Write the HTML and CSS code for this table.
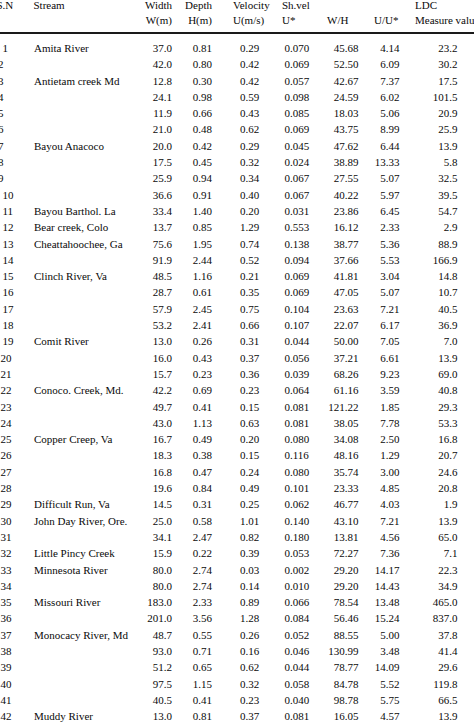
FILE: index.html
```html
<!DOCTYPE html>
<html>
<head>
<meta charset="utf-8">
<link rel="stylesheet" href="styles.css">
</head>
<body>
<div class="table">
  <div class="cols hdr">
    <div class="h sn-h"><span>S.N</span><span>&nbsp;</span></div>
    <div class="h"><span>Stream</span><span>&nbsp;</span></div>
    <div class="h r"><span>Width</span><span>W(m)</span></div>
    <div class="h r"><span>Depth</span><span>H(m)</span></div>
    <div class="h"><span>Velocity</span><span>U(m/s)</span></div>
    <div class="h"><span>Sh.vel</span><span>U*</span></div>
    <div class="h"><span>&nbsp;</span><span>W/H</span></div>
    <div class="h"><span>&nbsp;</span><span>U/U*</span></div>
    <div class="h"><span>LDC</span><span>Measure value</span></div>
  </div>
  <div class="rule"></div>
  <div class="rows">
    <div class="cols row"><span class="sn a">1</span><span>Amita River</span><span>37.0</span><span>0.81</span><span>0.29</span><span>0.070</span><span>45.68</span><span>4.14</span><span>23.2</span></div>
    <div class="cols row"><span class="sn b">2</span><span></span><span>42.0</span><span>0.80</span><span>0.42</span><span>0.069</span><span>52.50</span><span>6.09</span><span>30.2</span></div>
    <div class="cols row"><span class="sn b">3</span><span>Antietam creek Md</span><span>12.8</span><span>0.30</span><span>0.42</span><span>0.057</span><span>42.67</span><span>7.37</span><span>17.5</span></div>
    <div class="cols row"><span class="sn b">4</span><span></span><span>24.1</span><span>0.98</span><span>0.59</span><span>0.098</span><span>24.59</span><span>6.02</span><span>101.5</span></div>
    <div class="cols row"><span class="sn b">5</span><span></span><span>11.9</span><span>0.66</span><span>0.43</span><span>0.085</span><span>18.03</span><span>5.06</span><span>20.9</span></div>
    <div class="cols row"><span class="sn b">6</span><span></span><span>21.0</span><span>0.48</span><span>0.62</span><span>0.069</span><span>43.75</span><span>8.99</span><span>25.9</span></div>
    <div class="cols row"><span class="sn b">7</span><span>Bayou Anacoco</span><span>20.0</span><span>0.42</span><span>0.29</span><span>0.045</span><span>47.62</span><span>6.44</span><span>13.9</span></div>
    <div class="cols row"><span class="sn b">8</span><span></span><span>17.5</span><span>0.45</span><span>0.32</span><span>0.024</span><span>38.89</span><span>13.33</span><span>5.8</span></div>
    <div class="cols row"><span class="sn b">9</span><span></span><span>25.9</span><span>0.94</span><span>0.34</span><span>0.067</span><span>27.55</span><span>5.07</span><span>32.5</span></div>
    <div class="cols row"><span class="sn a">10</span><span></span><span>36.6</span><span>0.91</span><span>0.40</span><span>0.067</span><span>40.22</span><span>5.97</span><span>39.5</span></div>
    <div class="cols row"><span class="sn a">11</span><span>Bayou Barthol. La</span><span>33.4</span><span>1.40</span><span>0.20</span><span>0.031</span><span>23.86</span><span>6.45</span><span>54.7</span></div>
    <div class="cols row"><span class="sn a">12</span><span>Bear creek, Colo</span><span>13.7</span><span>0.85</span><span>1.29</span><span>0.553</span><span>16.12</span><span>2.33</span><span>2.9</span></div>
    <div class="cols row"><span class="sn a">13</span><span>Cheattahoochee, Ga</span><span>75.6</span><span>1.95</span><span>0.74</span><span>0.138</span><span>38.77</span><span>5.36</span><span>88.9</span></div>
    <div class="cols row"><span class="sn a">14</span><span></span><span>91.9</span><span>2.44</span><span>0.52</span><span>0.094</span><span>37.66</span><span>5.53</span><span>166.9</span></div>
    <div class="cols row"><span class="sn a">15</span><span>Clinch River, Va</span><span>48.5</span><span>1.16</span><span>0.21</span><span>0.069</span><span>41.81</span><span>3.04</span><span>14.8</span></div>
    <div class="cols row"><span class="sn a">16</span><span></span><span>28.7</span><span>0.61</span><span>0.35</span><span>0.069</span><span>47.05</span><span>5.07</span><span>10.7</span></div>
    <div class="cols row"><span class="sn a">17</span><span></span><span>57.9</span><span>2.45</span><span>0.75</span><span>0.104</span><span>23.63</span><span>7.21</span><span>40.5</span></div>
    <div class="cols row"><span class="sn a">18</span><span></span><span>53.2</span><span>2.41</span><span>0.66</span><span>0.107</span><span>22.07</span><span>6.17</span><span>36.9</span></div>
    <div class="cols row"><span class="sn a">19</span><span>Comit River</span><span>13.0</span><span>0.26</span><span>0.31</span><span>0.044</span><span>50.00</span><span>7.05</span><span>7.0</span></div>
    <div class="cols row"><span class="sn c">20</span><span></span><span>16.0</span><span>0.43</span><span>0.37</span><span>0.056</span><span>37.21</span><span>6.61</span><span>13.9</span></div>
    <div class="cols row"><span class="sn c">21</span><span></span><span>15.7</span><span>0.23</span><span>0.36</span><span>0.039</span><span>68.26</span><span>9.23</span><span>69.0</span></div>
    <div class="cols row"><span class="sn c">22</span><span>Conoco. Creek, Md.</span><span>42.2</span><span>0.69</span><span>0.23</span><span>0.064</span><span>61.16</span><span>3.59</span><span>40.8</span></div>
    <div class="cols row"><span class="sn c">23</span><span></span><span>49.7</span><span>0.41</span><span>0.15</span><span>0.081</span><span>121.22</span><span>1.85</span><span>29.3</span></div>
    <div class="cols row"><span class="sn c">24</span><span></span><span>43.0</span><span>1.13</span><span>0.63</span><span>0.081</span><span>38.05</span><span>7.78</span><span>53.3</span></div>
    <div class="cols row"><span class="sn c">25</span><span>Copper Creep, Va</span><span>16.7</span><span>0.49</span><span>0.20</span><span>0.080</span><span>34.08</span><span>2.50</span><span>16.8</span></div>
    <div class="cols row"><span class="sn c">26</span><span></span><span>18.3</span><span>0.38</span><span>0.15</span><span>0.116</span><span>48.16</span><span>1.29</span><span>20.7</span></div>
    <div class="cols row"><span class="sn c">27</span><span></span><span>16.8</span><span>0.47</span><span>0.24</span><span>0.080</span><span>35.74</span><span>3.00</span><span>24.6</span></div>
    <div class="cols row"><span class="sn c">28</span><span></span><span>19.6</span><span>0.84</span><span>0.49</span><span>0.101</span><span>23.33</span><span>4.85</span><span>20.8</span></div>
    <div class="cols row"><span class="sn c">29</span><span>Difficult Run, Va</span><span>14.5</span><span>0.31</span><span>0.25</span><span>0.062</span><span>46.77</span><span>4.03</span><span>1.9</span></div>
    <div class="cols row"><span class="sn c">30</span><span>John Day River, Ore.</span><span>25.0</span><span>0.58</span><span>1.01</span><span>0.140</span><span>43.10</span><span>7.21</span><span>13.9</span></div>
    <div class="cols row"><span class="sn c">31</span><span></span><span>34.1</span><span>2.47</span><span>0.82</span><span>0.180</span><span>13.81</span><span>4.56</span><span>65.0</span></div>
    <div class="cols row"><span class="sn c">32</span><span>Little Pincy Creek</span><span>15.9</span><span>0.22</span><span>0.39</span><span>0.053</span><span>72.27</span><span>7.36</span><span>7.1</span></div>
    <div class="cols row"><span class="sn c">33</span><span>Minnesota River</span><span>80.0</span><span>2.74</span><span>0.03</span><span>0.002</span><span>29.20</span><span>14.17</span><span>22.3</span></div>
    <div class="cols row"><span class="sn c">34</span><span></span><span>80.0</span><span>2.74</span><span>0.14</span><span>0.010</span><span>29.20</span><span>14.43</span><span>34.9</span></div>
    <div class="cols row"><span class="sn c">35</span><span>Missouri River</span><span>183.0</span><span>2.33</span><span>0.89</span><span>0.066</span><span>78.54</span><span>13.48</span><span>465.0</span></div>
    <div class="cols row"><span class="sn c">36</span><span></span><span>201.0</span><span>3.56</span><span>1.28</span><span>0.084</span><span>56.46</span><span>15.24</span><span>837.0</span></div>
    <div class="cols row"><span class="sn c">37</span><span>Monocacy River, Md</span><span>48.7</span><span>0.55</span><span>0.26</span><span>0.052</span><span>88.55</span><span>5.00</span><span>37.8</span></div>
    <div class="cols row"><span class="sn c">38</span><span></span><span>93.0</span><span>0.71</span><span>0.16</span><span>0.046</span><span>130.99</span><span>3.48</span><span>41.4</span></div>
    <div class="cols row"><span class="sn c">39</span><span></span><span>51.2</span><span>0.65</span><span>0.62</span><span>0.044</span><span>78.77</span><span>14.09</span><span>29.6</span></div>
    <div class="cols row"><span class="sn c">40</span><span></span><span>97.5</span><span>1.15</span><span>0.32</span><span>0.058</span><span>84.78</span><span>5.52</span><span>119.8</span></div>
    <div class="cols row"><span class="sn c">41</span><span></span><span>40.5</span><span>0.41</span><span>0.23</span><span>0.040</span><span>98.78</span><span>5.75</span><span>66.5</span></div>
    <div class="cols row"><span class="sn c">42</span><span>Muddy River</span><span>13.0</span><span>0.81</span><span>0.37</span><span>0.081</span><span>16.05</span><span>4.57</span><span>13.9</span></div>
  </div>
</div>
</body>
</html>
```

FILE: styles.css
```css
html, body {
  margin: 0;
  padding: 0;
  background: #ffffff;
}

body {
  width: 474px;
  height: 724px;
  overflow: hidden;
  font-family: "Liberation Serif", "Times New Roman", serif;
  font-size: 11px;
  color: #0a0a0a;
  white-space: nowrap;
}

.table {
  width: 480px;
}

.cols {
  display: grid;
  grid-template-columns: 33.5px 106.5px 32px 40px 58px 40px 48.5px 41px 80px;
}

/* header */
.hdr {
  margin-top: -2px;
  line-height: 15px;
}

.h {
  display: flex;
  flex-direction: column;
}

.h.r {
  align-items: flex-end;
}

.sn-h {
  margin-left: -3.5px;
}

.hdr > :nth-child(5) { padding-left: 21px; }
.hdr > :nth-child(6) { padding-left: 12px; }
.hdr > :nth-child(7) { padding-left: 17px; }
.hdr > :nth-child(8) { padding-left: 15.5px; }
.hdr > :nth-child(9) { padding-left: 15.5px; }

.rule {
  margin-top: 4px;
  border-top: 2px solid #1a1a1a;
}

/* body rows */
.rows {
  padding-top: 6px;
}

.row {
  height: 16.3px;
  line-height: 16.3px;
}

.sn.a { padding-left: 2.5px; }
.sn.b { margin-left: -2px; }
.sn.c { padding-left: 0.5px; }

.row > :nth-child(2) { padding-left: 0.5px; }
.row > :nth-child(3),
.row > :nth-child(4) { text-align: right; }
.row > :nth-child(5) { padding-left: 28px; }
.row > :nth-child(6) { padding-left: 14.5px; }
.row > :nth-child(7),
.row > :nth-child(8) { text-align: right; }
.row > :nth-child(9) { text-align: right; padding-right: 22px; }
```
